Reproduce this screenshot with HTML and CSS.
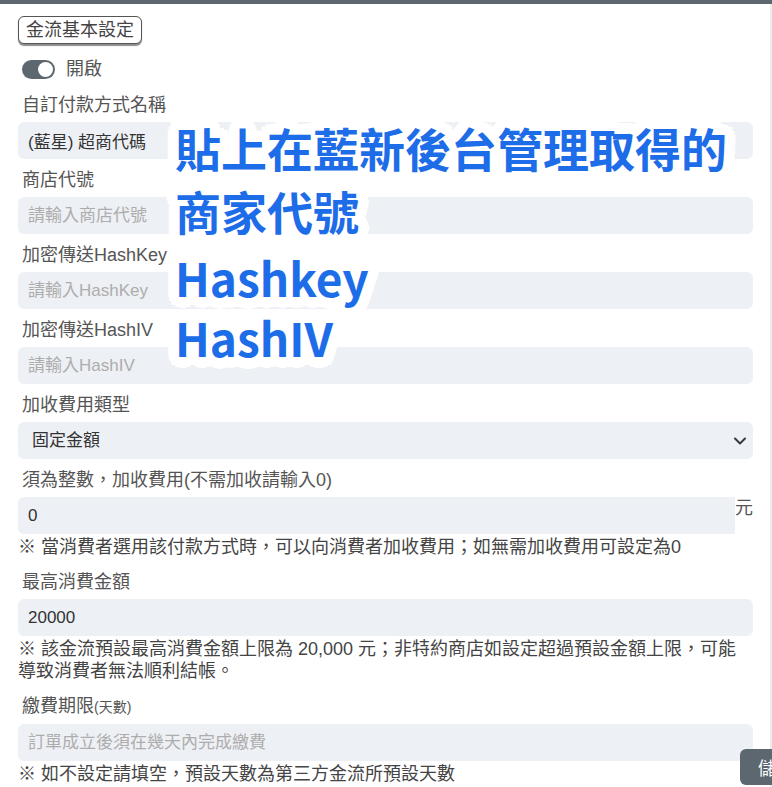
FILE: index.html
```html
<!DOCTYPE html>
<html lang="zh-Hant">
<head>
<meta charset="utf-8">
<title>金流基本設定</title>
<link rel="stylesheet" href="styles.css">
</head>
<body>
<div class="topbar"></div>
<div class="page">
  <button class="section-btn" type="button">金流基本設定</button>

  <div class="switch-row">
    <span class="switch"><span class="knob"></span></span>
    <span class="switch-label">開啟</span>
  </div>

  <div class="field">
    <div class="label">自訂付款方式名稱</div>
    <input class="input" type="text" value="(藍星) 超商代碼">
  </div>

  <div class="field">
    <div class="label">商店代號</div>
    <input class="input" type="text" placeholder="請輸入商店代號">
  </div>

  <div class="field">
    <div class="label">加密傳送HashKey</div>
    <input class="input" type="text" placeholder="請輸入HashKey">
  </div>

  <div class="field">
    <div class="label">加密傳送HashIV</div>
    <input class="input" type="text" placeholder="請輸入HashIV">
  </div>

  <div class="field">
    <div class="label">加收費用類型</div>
    <div class="select-wrap">
      <select class="select"><option>固定金額</option></select>
      <svg class="chevron" width="14" height="10" viewBox="0 0 14 10"><path d="M2 2.5 L7 7.5 L12 2.5" fill="none" stroke="#343a40" stroke-width="2" stroke-linecap="round" stroke-linejoin="round"/></svg>
    </div>
  </div>

  <div class="field has-note">
    <div class="label">須為整數，加收費用(不需加收請輸入0)</div>
    <div class="input-group">
      <input class="input input-left" type="text" value="0">
      <span class="addon">元</span>
    </div>
    <div class="note">※ 當消費者選用該付款方式時，可以向消費者加收費用；如無需加收費用可設定為0</div>
  </div>

  <div class="field has-note">
    <div class="label">最高消費金額</div>
    <input class="input" type="text" value="20000">
    <div class="note">※ 該金流預設最高消費金額上限為 20,000 元；非特約商店如設定超過預設金額上限，可能導致消費者無法順利結帳。</div>
  </div>

  <div class="field has-note">
    <div class="label">繳費期限<span class="small">(天數)</span></div>
    <input class="input" type="text" placeholder="訂單成立後須在幾天內完成繳費">
    <div class="note">※ 如不設定請填空，預設天數為第三方金流所預設天數</div>
  </div>
</div>

<button class="save-btn" type="button">儲存設定</button>

<div class="annotation">
  <div class="ann-line">貼上在藍新後台管理取得的</div>
  <div class="ann-line">商家代號</div>
  <div class="ann-line ann-latin">Hashkey</div>
  <div class="ann-line ann-last">HashIV</div>
</div>
</body>
</html>
```

FILE: styles.css
```css
html, body {
  margin: 0;
  padding: 0;
  background: #fff;
  overflow: hidden;
}

body {
  position: relative;
  width: 772px;
  height: 787px;
  font-family: "Liberation Sans", "Noto Sans CJK TC", sans-serif;
  font-size: 18px;
  color: #555;
}

.topbar {
  height: 4px;
  background: #5c6770;
}

.page {
  box-sizing: border-box;
  width: 772px;
  height: 783px;
  padding: 12px 17px 0 18px;
  border-right: 2px solid #ececec;
}

.section-btn {
  display: block;
  box-sizing: border-box;
  height: 28px;
  padding: 0 7px;
  margin: 0;
  font-family: inherit;
  font-size: 18px;
  line-height: 26px;
  color: #444;
  background: #fff;
  border: 1px solid #555;
  border-radius: 6px;
  box-shadow: 0 1.5px 1px rgba(0, 0, 0, 0.45);
}

.switch-row {
  display: flex;
  align-items: center;
  height: 26px;
  margin-top: 12px;
  padding-left: 4px;
  gap: 11px;
}

.switch {
  display: flex;
  justify-content: flex-end;
  align-items: center;
  box-sizing: border-box;
  width: 33px;
  height: 19px;
  padding: 0 2px;
  border-radius: 10px;
  background: #5c6770;
}

.knob {
  width: 15px;
  height: 15px;
  border-radius: 50%;
  background: #fff;
}

.switch-label {
  line-height: 26px;
  color: #555;
}

.field {
  margin-bottom: 8px;
}

.switch-row + .field {
  margin-top: 10px;
}

.field.has-note {
  margin-bottom: 11px;
}

.label {
  padding-left: 4px;
  line-height: 26px;
  margin-bottom: 4px;
  color: #555;
}

.small {
  font-size: 14px;
}

.input {
  display: block;
  box-sizing: border-box;
  width: 100%;
  height: 37px;
  margin: 0;
  padding: 0 10px;
  border: none;
  outline: none;
  border-radius: 6px;
  background: #edf0f4;
  font-family: "Liberation Sans", "Noto Sans CJK TC", sans-serif;
  font-size: 17px;
  color: #333;
}

.input::placeholder {
  color: #adadad;
}

.select-wrap {
  position: relative;
}

.select {
  display: block;
  box-sizing: border-box;
  width: 100%;
  height: 37px;
  margin: 0;
  padding: 0 14px;
  border: none;
  outline: none;
  border-radius: 6px;
  background: #edf0f4;
  font-family: "Liberation Sans", "Noto Sans CJK TC", sans-serif;
  font-size: 17px;
  color: #333;
  -webkit-appearance: none;
  appearance: none;
}

.chevron {
  position: absolute;
  right: 6px;
  top: 14px;
}

.input-group {
  display: flex;
  align-items: flex-start;
}

.input-left {
  flex: 1;
  width: auto;
  border-radius: 6px 0 0 6px;
}

.addon {
  width: 18px;
  line-height: 22px;
  color: #555;
}

.note {
  margin-top: 2px;
  line-height: 22px;
  color: #444;
}

.save-btn {
  position: absolute;
  left: 740px;
  top: 749px;
  width: 100px;
  height: 36px;
  margin: 0;
  padding: 0 0 0 18px;
  text-align: left;
  border: none;
  border-radius: 6px;
  background: #5c6770;
  color: #fff;
  font-family: "Liberation Sans", "Noto Sans CJK TC", sans-serif;
  font-size: 18px;
}

.annotation {
  position: absolute;
  left: 175px;
  top: 116px;
  font-family: "Noto Sans CJK TC", sans-serif;
  font-weight: 700;
  font-size: 46px;
  color: #1d6ce8;
  text-shadow:
    11px 0 #fff, -11px 0 #fff, 0 11px #fff, 0 -11px #fff,
    8px 8px #fff, -8px 8px #fff, 8px -8px #fff, -8px -8px #fff,
    10px 4px #fff, 10px -4px #fff, -10px 4px #fff, -10px -4px #fff,
    4px 10px #fff, -4px 10px #fff, 4px -10px #fff, -4px -10px #fff,
    6px 0 #fff, -6px 0 #fff, 0 6px #fff, 0 -6px #fff,
    4px 4px #fff, -4px 4px #fff, 4px -4px #fff, -4px -4px #fff;
}

.ann-line {
  line-height: 63px;
  white-space: nowrap;
}

.ann-latin {
  margin-top: 3px;
  line-height: 64px;
}

.ann-last {
  line-height: 56px;
}
```
